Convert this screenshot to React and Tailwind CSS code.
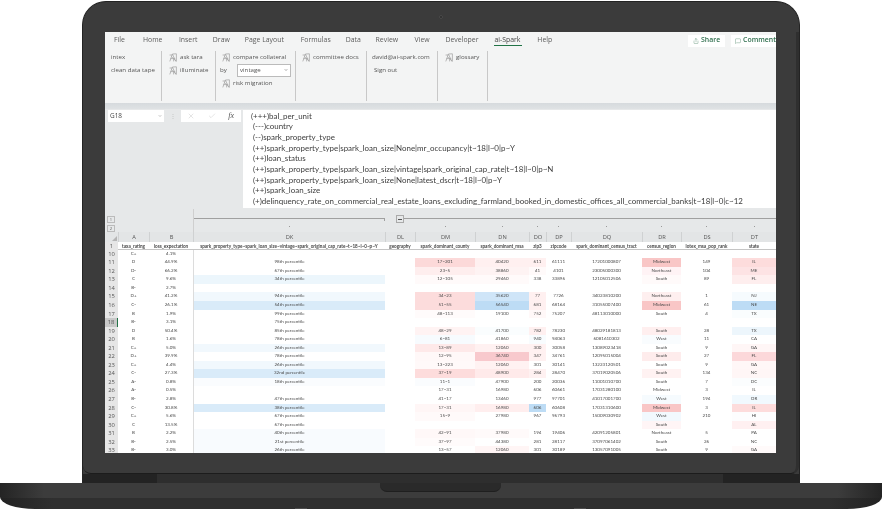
import React from "react";
import { X, Check, Share, MessageSquare, ChevronDown } from "lucide-react";

const GRID = "grid grid-cols-[13px_31px_44px_192px_30px_60px_54px_17px_25px_71px_39px_51px_44px] shrink-0";
const LETTERS = ["A", "B", "DK", "DL", "DM", "DN", "DO", "DP", "DQ", "DR", "DS", "DT"];
const HEADERS = ["taxa_rating", "loss_expectation", "spark_property_type~spark_loan_size~vintage~spark_original_cap_rate~t~18~l~0~p~Y", "geography", "spark_dominant_county", "spark_dominant_msa", "zip3", "zipcode", "spark_dominant_census_tract", "census_region", "lotex_msa_pop_rank", "state"];

const ROWS = [
  [10, "C+", "4.1%", "", "", "", "", "", "", "", "", "", ""],
  [11, "D", "44.9%", "98th percentile", "", "17~201", "40420", "611", "61111", "17201000807", "Midwest", "149", "IL"],
  [12, "D-", "66.2%", "67th percentile", "", "23~5", "38860", "41", "4101", "23005000300", "Northeast", "104", "ME"],
  [13, "C", "9.6%", "34th percentile", "", "12~105", "29460", "338", "33896", "12105012506", "South", "89", "FL"],
  [14, "B-", "2.7%", "", "", "", "", "", "", "", "", "", ""],
  [15, "D+", "41.2%", "94th percentile", "", "34~23", "35620", "77", "7726", "34023810200", "Northeast", "1", "NJ"],
  [16, "C-", "26.1%", "54th percentile", "", "51~55", "56540", "681", "68164", "31055007400", "Midwest", "61", "NE"],
  [17, "B", "1.9%", "99th percentile", "", "48~113", "19100", "752", "75207", "48113010000", "South", "4", "TX"],
  [18, "B-", "3.1%", "75th percentile", "", "", "", "", "", "", "", "", ""],
  [19, "D", "50.4%", "85th percentile", "", "48~29", "41700", "782", "78230", "48029181813", "South", "28", "TX"],
  [20, "B", "1.6%", "78th percentile", "", "6~81", "41860", "940", "94063", "6081610302", "West", "11", "CA"],
  [21, "C+", "5.0%", "26th percentile", "", "13~89", "12060", "300", "30058", "13089023418", "South", "9", "GA"],
  [22, "D+", "39.9%", "78th percentile", "", "12~95", "36740", "347", "34761", "12095015004", "South", "27", "FL"],
  [23, "C+", "4.4%", "26th percentile", "", "13~223", "12060", "301", "30141", "13223120501", "South", "9", "GA"],
  [24, "C-", "27.3%", "32nd percentile", "", "37~19", "48900", "284", "28470", "37019020506", "South", "134", "NC"],
  [25, "A-", "0.8%", "18th percentile", "", "11~1", "47900", "200", "20036", "11001010700", "South", "7", "DC"],
  [26, "A-", "0.5%", "", "", "17~31", "16980", "606", "60661", "17031280100", "Midwest", "3", "IL"],
  [27, "B-", "2.8%", "47th percentile", "", "41~17", "13460", "977", "97701", "41017001700", "West", "194", "OR"],
  [28, "C-", "30.8%", "38th percentile", "", "17~31", "16980", "606", "60608", "17031310600", "Midwest", "3", "IL"],
  [29, "C+", "5.6%", "67th percentile", "", "15~9", "27980", "967", "96793", "15009030902", "West", "210", "HI"],
  [30, "C", "13.5%", "67th percentile", "", "", "", "", "", "", "South", "", "AL"],
  [31, "B", "2.2%", "40th percentile", "", "42~91", "37980", "194", "19406", "42091205801", "Northeast", "5", "PA"],
  [32, "B-", "2.5%", "21st percentile", "", "37~97", "44380", "281", "28117", "37097061402", "South", "26", "NC"],
  [33, "B-", "3.0%", "26th percentile", "", "13~57", "12060", "301", "30189", "13057091005", "South", "9", "GA"],
];

const HEAT = {
  11: { 5: "bg-[#fcd9d9]", 6: "bg-[#fff0f0]", 7: "bg-[#fff0f0]", 10: "bg-[#f9c6c6]", 12: "bg-[#fddcdc]" },
  12: { 5: "bg-[#feeeee]", 6: "bg-[#fef3f3]", 7: "bg-[#fffafa]", 10: "bg-[#fff3f5]", 12: "bg-[#fde3e4]" },
  13: { 3: "bg-[#ecf6fc]", 5: "bg-[#fffafa]", 6: "bg-[#fffafa]", 10: "bg-[#fffafa]", 12: "bg-[#feeeee]" },
  15: { 3: "bg-[#f1f8fd]", 5: "bg-[#fcdcdc]", 6: "bg-[#cfe5f8]", 7: "bg-[#fff0f0]", 10: "bg-[#feefef]", 12: "bg-[#f6fbfe]" },
  16: { 3: "bg-[#d9ebf9]", 5: "bg-[#fcdcdc]", 6: "bg-[#bddcf5]", 7: "bg-[#fff0f0]", 10: "bg-[#f9c6c6]", 12: "bg-[#bddcf5]" },
  17: { 5: "bg-[#fffbfb]", 7: "bg-[#fff8f8]", 12: "bg-[#fafdfe]" },
  19: { 5: "bg-[#fff3f3]", 6: "bg-[#fafdfe]", 7: "bg-[#fff0f0]", 10: "bg-[#ffefef]", 12: "bg-[#edf6fc]" },
  20: { 5: "bg-[#f7fbfe]", 7: "bg-[#f8fcfe]", 10: "bg-[#f9fcfe]" },
  21: { 3: "bg-[#f1f8fd]", 5: "bg-[#fee9e9]", 6: "bg-[#fff1f1]", 7: "bg-[#fff1f1]", 12: "bg-[#fff6f6]" },
  22: { 5: "bg-[#fff8f8]", 6: "bg-[#f8c9cd]", 7: "bg-[#fff1f1]", 10: "bg-[#feecec]", 12: "bg-[#fcd8da]" },
  23: { 3: "bg-[#f1f8fd]", 5: "bg-[#fff9f9]", 6: "bg-[#fff2f2]", 12: "bg-[#fff7f7]" },
  24: { 3: "bg-[#d9ebf9]", 5: "bg-[#fddcdc]", 6: "bg-[#ffeaea]", 7: "bg-[#fff1f1]", 10: "bg-[#fff2f2]", 12: "bg-[#fff6f6]" },
  25: { 3: "bg-[#fafcfe]", 5: "bg-[#fafcfe]", 12: "bg-[#fbfdfe]" },
  27: { 10: "bg-[#f6fbfe]", 12: "bg-[#f1f9fe]" },
  28: { 3: "bg-[#d9ebf9]", 5: "bg-[#fff6f6]", 6: "bg-[#ffeeee]", 7: "bg-[#bddcf5]", 10: "bg-[#f9c6c6]", 12: "bg-[#fddcdc]" },
  29: { 5: "bg-[#fffafa]", 10: "bg-[#f2f9fe]", 12: "bg-[#fdfdfe]" },
  30: { 10: "bg-[#fff5f6]", 12: "bg-[#fff0f1]" },
  31: { 3: "bg-[#f8fbfe]", 5: "bg-[#fff8f8]", 6: "bg-[#fffafa]" },
  32: { 3: "bg-[#f8fbfe]", 5: "bg-[#fffbfb]" },
  33: { 3: "bg-[#f8fbfe]", 6: "bg-[#fff5f5]", 12: "bg-[#fffafa]" },
};

const TABS = [
  ["File", "w-[29px]"], ["Home", "w-[36px]"], ["Insert", "w-[34px]"], ["Draw", "w-[32px]"], ["Page Layout", "w-[56px]"],
  ["Formulas", "w-[45px]"], ["Data", "w-[30px]"], ["Review", "w-[39px]"], ["View", "w-[31px]"], ["Developer", "w-[49px]"],
];

function SparkIcon() {
  return (
    <svg viewBox="0 0 8 9" className="w-[8px] h-[9px] shrink-0" fill="none" stroke="#a8a8a8" strokeWidth="0.8">
      <path d="M0.8 8.4 L3.4 1 L7.4 0.8 M3.4 1 L6.8 8.4 M1.4 5.6 H6.2 M2.2 3.4 L7.2 8.2 M0.6 2 H3.2 M4.6 8.4 V4.6 M7.4 0.8 V8.4" />
    </svg>
  );
}

function RibbonItem({ label, icon }) {
  return (
    <div className="flex items-center gap-[3px] h-[13px] whitespace-nowrap">
      {icon && <SparkIcon />}
      <span>{label}</span>
    </div>
  );
}

function Ribbon() {
  return (
    <div className="h-[55px] shrink-0 bg-[#f3f4f4] flex pt-[2.5px] pb-[2px] text-[6.15px] text-[#555] font-['Open_Sans',sans-serif] leading-none">
      <div className="w-[57px] border-r border-[#c8c8c8] pl-[6px]">
        <RibbonItem label="intex" />
        <RibbonItem label="clean data tape" />
      </div>
      <div className="w-[54px] border-r border-[#c8c8c8] pl-[7px]">
        <RibbonItem label="ask tara" icon />
        <RibbonItem label="illuminate" icon />
      </div>
      <div className="w-[80px] border-r border-[#c8c8c8] pl-[4px]">
        <div className="pl-[2px]"><RibbonItem label="compare collateral" icon /></div>
        <div className="flex items-center h-[13px]">
          <span className="w-[17px]">by</span>
          <div className="w-[54px] h-[13px] bg-white border border-[#bbb] flex items-center justify-between pl-[2px] pr-[2px]">
            <span>vintage</span>
            <ChevronDown size={4} strokeWidth={3} color="#555" />
          </div>
        </div>
        <div className="pl-[2px]"><RibbonItem label="risk migration" icon /></div>
      </div>
      <div className="w-[71px] border-r border-[#c8c8c8] pl-[6px]">
        <RibbonItem label="committee docs" icon />
      </div>
      <div className="w-[71px] border-r border-[#c8c8c8] pl-[5px]">
        <RibbonItem label="david@ai-spark.com" />
        <div className="pl-[2px]"><RibbonItem label="Sign out" /></div>
      </div>
      <div className="w-[50px] border-r border-[#c8c8c8] pl-[7px]">
        <RibbonItem label="glossary" icon />
      </div>
    </div>
  );
}

function TabBar() {
  return (
    <div className="h-[16px] shrink-0 bg-[#f3f4f4] flex items-center pl-[9px] pt-[1px] text-[6.9px] text-[#5c5c5c] font-['Open_Sans',sans-serif] leading-none">
      {TABS.map(([t, w]) => (
        <span key={t} className={w}>{t}</span>
      ))}
      <span className="w-[43px] relative text-[#444]">
        ai-Spark
        <span className="absolute left-0 top-[7.5px] w-[28px] h-[1.5px] bg-[#217346]" />
      </span>
      <span className="w-[151px]">Help</span>
      <div className="w-[37px] h-[12px] bg-white flex items-center justify-center gap-[2px] text-[#2f6f4e] font-semibold">
        <Share size={6} strokeWidth={1.3} />
        <span>Share</span>
      </div>
      <div className="w-[45px] ml-[6px] h-[12px] bg-white flex items-center pl-[4px] gap-[2px] text-[#2f6f4e] font-semibold overflow-hidden whitespace-nowrap">
        <MessageSquare size={6} strokeWidth={1.3} className="shrink-0" />
        <span>Comments</span>
      </div>
    </div>
  );
}

const FORMULA = [
  ["(+++)bal_per_unit", "pl-[8px]"],
  ["(---)country", "pl-[10px]"],
  ["(--)spark_property_type", "pl-[10px]"],
  ["(++)spark_property_type|spark_loan_size|None|mr_occupancy|t~18|l~0|p~Y", "pl-[10px]"],
  ["(++)loan_status", "pl-[10px]"],
  ["(++)spark_property_type|spark_loan_size|vintage|spark_original_cap_rate|t~18|l~0|p~N", "pl-[10px]"],
  ["(++)spark_property_type|spark_loan_size|None|latest_dscr|t~18|l~0|p~Y", "pl-[10px]"],
  ["(++)spark_loan_size", "pl-[10px]"],
  ["(+)delinquency_rate_on_commercial_real_estate_loans_excluding_farmland_booked_in_domestic_offices_all_commercial_banks|t~18|l~0|c~12", "pl-[10px]"],
];

function FormulaBar() {
  return (
    <div className="h-[100px] shrink-0 bg-[#e6e8e9] flex pt-[1px] pb-[1px]">
      <div className="w-[138px] shrink-0 flex items-start pl-[3px]">
        <div className="w-[56px] h-[12px] bg-white flex items-center justify-between px-[2px] text-[6.4px] text-[#444] font-['Open_Sans',sans-serif] leading-none">
          <span>G18</span>
          <ChevronDown size={4} strokeWidth={3} color="#888" />
        </div>
        <div className="w-[17px] h-[12px] flex items-center justify-center text-[#bbb] text-[6px] leading-none">⋮</div>
        <div className="w-[60px] h-[12px] bg-white flex items-center justify-between pl-[6px] pr-[7px]">
          <X size={8} strokeWidth={1} color="#b0b0b0" />
          <Check size={8} strokeWidth={1} color="#b0b0b0" />
          <span className="font-['Liberation_Serif',serif] italic text-[8px] text-[#555] leading-none">fx</span>
        </div>
      </div>
      <div className="flex-1 bg-white overflow-hidden whitespace-nowrap font-['Lato',sans-serif] text-[7.95px] leading-[10.7px] text-[#3c3c3c] pt-[0.5px]">
        {FORMULA.map(([t, p]) => (
          <div key={t} className={p}>{t}</div>
        ))}
      </div>
    </div>
  );
}

function Dot() {
  return <span className="block w-[1px] h-[1px] bg-[#999]" />;
}

function OutlineBar() {
  return (
    <div className={`${GRID} h-[23px] bg-[#e6e8e9] text-[#555] font-['Open_Sans',sans-serif]`}>
      <div className="flex flex-col pl-[2px] pt-[7px] gap-[2px]">
        <div className="w-[8px] h-[7px] border border-[#bbb] flex items-center justify-center text-[4px] leading-none">1</div>
        <div className="w-[8px] h-[7px] border border-[#bbb] flex items-center justify-center text-[4px] leading-none">2</div>
      </div>
      <div className="col-span-2" />
      <div className="flex flex-col items-center pt-[9px] border-l border-[#cfcfcf]">
        <div className="w-full h-[3px] border-t border-r border-[#a0a0a0]" />
        <div className="pt-[5px]"><Dot /></div>
      </div>
      <div className="flex items-start pt-[6px] pl-[11px]">
        <div className="w-[8px] h-[8px] border border-[#aaa] shrink-0 flex items-center justify-center"><span className="w-[4px] h-[1px] bg-[#555]" /></div>
        <div className="flex-1 h-[1px] mt-[3px] bg-[#a0a0a0]" />
      </div>
      <div className="col-span-8 pt-[9px]">
        <div className="h-[1px] bg-[#a0a0a0]" />
        <div className="grid grid-cols-[60px_54px_17px_25px_71px_39px_51px_44px] justify-items-center pt-[7px]">
          <Dot /><Dot /><Dot /><Dot /><Dot /><Dot /><Dot /><Dot />
        </div>
      </div>
    </div>
  );
}

function LetterRow() {
  return (
    <div className={`${GRID} h-[9.7px] bg-[#e3e5e6] text-[5.7px] text-[#555] leading-[10px] text-center font-['Open_Sans',sans-serif]`}>
      <div className="flex items-end justify-end pr-[1px] pb-[1px]"><span className="w-0 h-0 border-l-[5px] border-l-transparent border-b-[5px] border-b-[#b5b5b5]" /></div>
      {LETTERS.map((l) => (
        <div key={l} className="border-l border-[#cfd1d2]">{l}</div>
      ))}
    </div>
  );
}

function HeaderRow() {
  return (
    <div className={`${GRID} h-[8px] bg-white border-b border-[#c5c5c5] text-[4.6px] font-bold text-[#444] leading-[8px] text-center whitespace-nowrap font-['Lato',sans-serif]`}>
      <div className="bg-[#e6e6e6] text-[5.8px] font-normal text-[#555] font-['Open_Sans',sans-serif]">1</div>
      {HEADERS.map((h) => (
        <div key={h} className="overflow-hidden">{h}</div>
      ))}
    </div>
  );
}

function DataRow({ row }) {
  const [n, ...cells] = row;
  const selected = n === 18;
  return (
    <div className={`${GRID} h-[8.56px] text-[4.5px] text-[#4a4a4a] leading-[8.56px] text-center whitespace-nowrap font-['Lato',sans-serif]`}>
      <div className={`text-[5.8px] text-[#555] font-['Open_Sans',sans-serif] ${selected ? "bg-[#c8c8c8] border-r border-[#217346]" : "bg-[#e6e6e6]"}`}>{n}</div>
      {cells.map((c, i) => {
        const heat = (HEAT[n] && HEAT[n][i + 1]) || "";
        const edge = i === 2 ? "border-l border-[#dcdcdc]" : "";
        return (
          <div key={i} className={`${heat} ${edge}`}>{c}</div>
        );
      })}
    </div>
  );
}

function Screen() {
  return (
    <div className="w-[671px] h-[421px] bg-white overflow-hidden flex flex-col blur-[0.4px] shrink-0">
      <TabBar />
      <Ribbon />
      <div className="h-[6px] shrink-0 bg-[linear-gradient(180deg,#d6dadd_0%,#dfe2e4_100%)]" />
      <FormulaBar />
      <OutlineBar />
      <LetterRow />
      <HeaderRow />
      {ROWS.map((r) => (
        <DataRow key={r[0]} row={r} />
      ))}
    </div>
  );
}

function Lid() {
  return (
    <div className="ml-[82px] mt-[1px] w-[718px] h-[482px] shrink-0 rounded-t-[24px] bg-[#3b3b3b] border-x border-t border-[#232323] flex flex-col">
      <div className="h-[30px] shrink-0 flex justify-center items-center">
        <span className="w-[4px] h-[4px] rounded-full bg-[#2c2c2c] border border-[#4a4a4a] mr-[1px]" />
      </div>
      <div className="flex-1 flex flex-col">
        <div className="h-[442px] shrink-0 flex flex-col items-start pl-[22px] border-b border-[#1c1c1c] rounded-b-[8px] border-r-[3px] border-r-[#2f2f2f]">
          <Screen />
        </div>
        <div className="flex-1 flex">
          <div className="w-[74px] bg-[#232323]" />
          <div className="flex-1 bg-[#2e2e2e]" />
          <div className="w-[76px] bg-[#232323]" />
        </div>
      </div>
    </div>
  );
}

function Base() {
  return (
    <div className="relative w-[882px] h-[26px] shrink-0 rounded-bl-[35px_12px] rounded-br-[35px_12px] overflow-hidden flex flex-col">
      <div className="h-[15px] bg-[linear-gradient(90deg,#242424_0%,#3c3c3c_5%,#3c3c3c_95%,#242424_100%)]" />
      <div className="flex-1 bg-[linear-gradient(90deg,#222222_0%,#2f2f2f_6%,#2f2f2f_94%,#222222_100%)]" />
      <div className="absolute left-[380px] top-0 w-[121px] h-[9px] rounded-b-[7px] bg-[#2a2a2a] border-b border-[#1f1f1f]" />
      <div className="absolute left-[295px] bottom-0 w-[12px] h-[1px] bg-[#4c4c4c]" />
      <div className="absolute left-[574px] bottom-0 w-[12px] h-[1px] bg-[#4c4c4c]" />
    </div>
  );
}

export default function App() {
  return (
    <div className="w-[882px] h-[509px] bg-white overflow-hidden flex flex-col">
      <Lid />
      <Base />
    </div>
  );
}
